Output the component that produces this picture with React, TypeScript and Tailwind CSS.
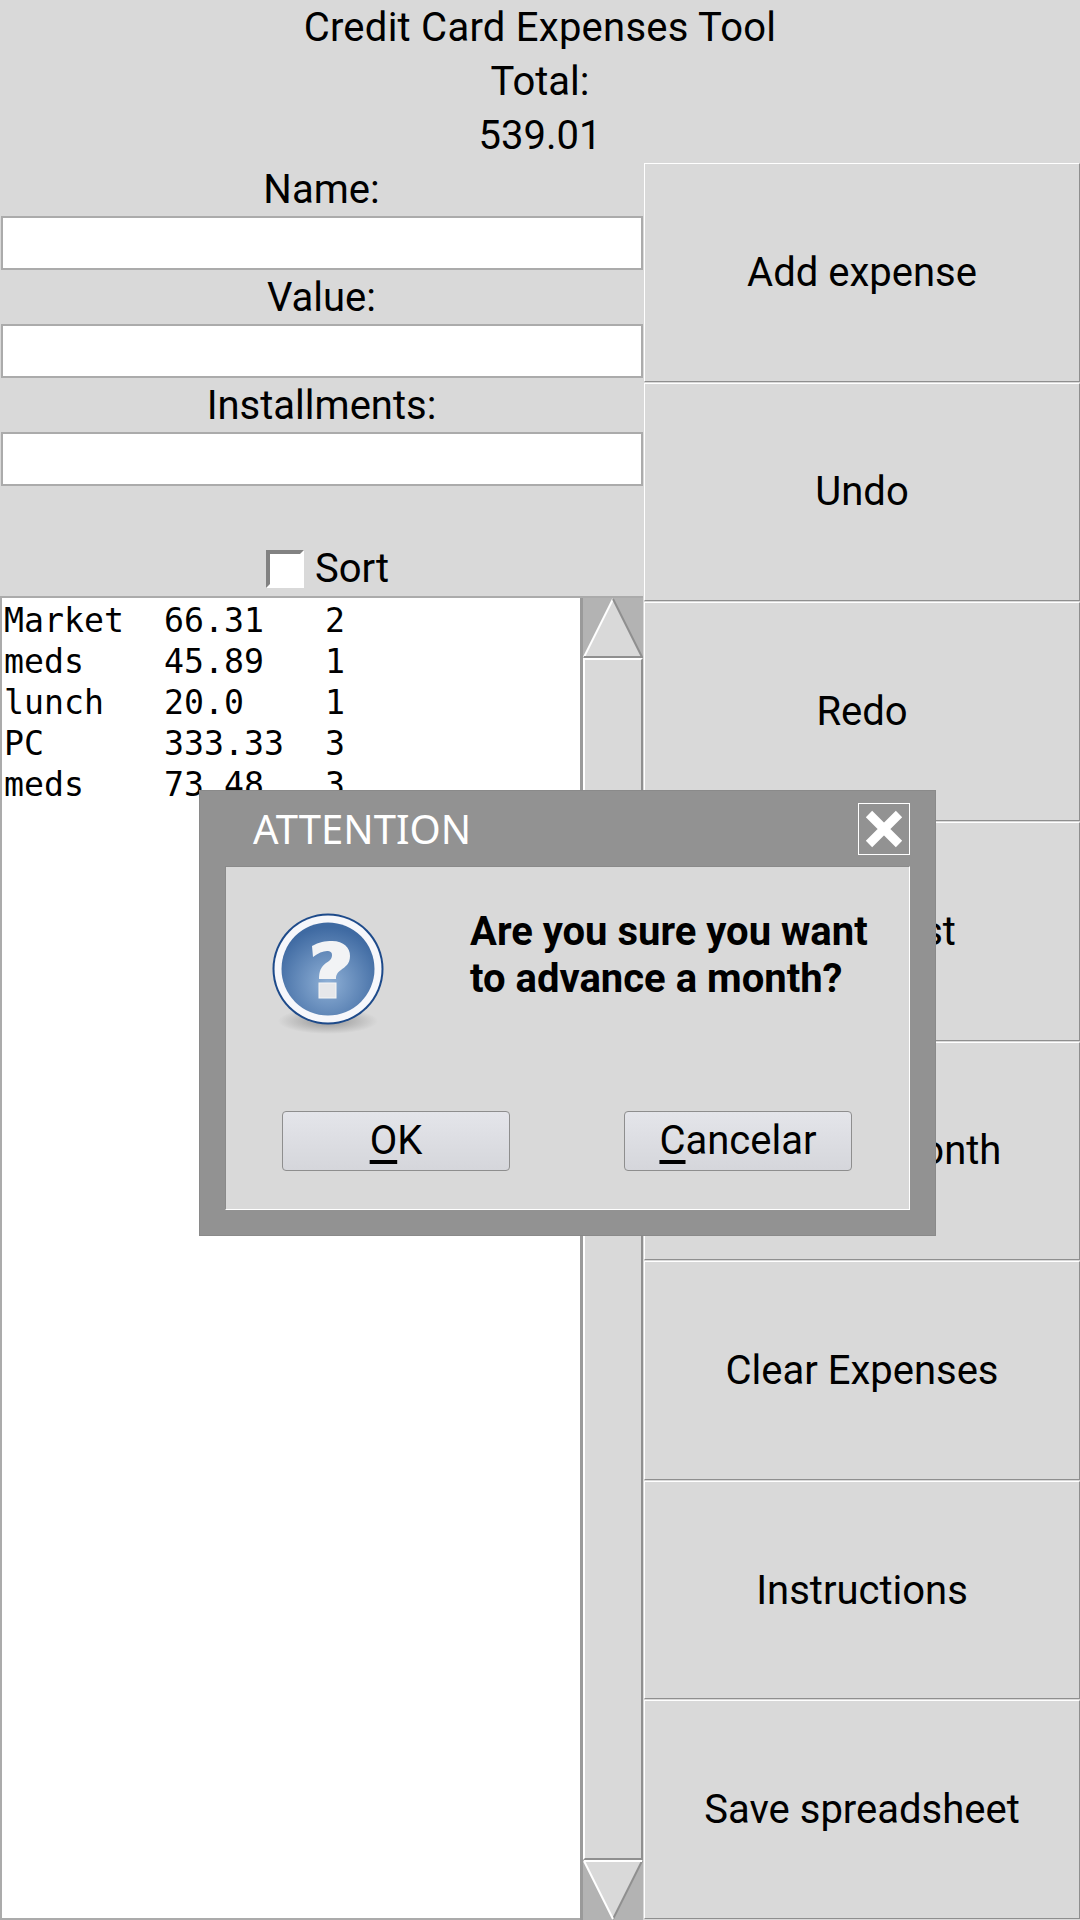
const ROBOTO = "font-['Roboto',sans-serif]";

function Label({ text, wide }: { text: string; wide?: boolean }) {
  return (
    <div className={`h-[54px] pt-[2px] flex items-center justify-center text-[40px] leading-none text-black ${wide ? "tracking-[0.25px]" : ""}`}>
      {text}
    </div>
  );
}

function Entry() {
  return <div className="h-[54px] ml-[1px] bg-white border-2 border-[#ababab]" />;
}

function SideButton({ text }: { text: string }) {
  return (
    <div className="flex items-center justify-center pt-[1px] bg-[#d9d9d9] border border-t-white border-l-white border-r-[#8f8f8f] border-b-[#8f8f8f] text-[40px] text-black">
      {text}
    </div>
  );
}

function DialogButton({ first, rest }: { first: string; rest: string }) {
  return (
    <div className="w-[228px] h-[60px] flex items-center justify-center rounded-[4px] border border-[#8e8e8e] bg-gradient-to-b from-[#e4e5ea] to-[#d5d6db] text-[40px] leading-none text-black">
      <span className="underline decoration-[4px] underline-offset-[6px] [text-decoration-skip-ink:none]">{first}</span>
      <span>{rest}</span>
    </div>
  );
}

function QuestionIcon() {
  return (
    <svg width="120" height="122" viewBox="0 0 120 122" className="block">
      <defs>
        <radialGradient id="q" cx="50%" cy="65%" r="60%">
          <stop offset="0%" stopColor="#8fb0d6" />
          <stop offset="100%" stopColor="#3f6aa2" />
        </radialGradient>
        <radialGradient id="s" cx="50%" cy="50%" r="50%">
          <stop offset="0%" stopColor="#777777" stopOpacity="0.7" />
          <stop offset="100%" stopColor="#777777" stopOpacity="0" />
        </radialGradient>
      </defs>
      <ellipse cx="56" cy="108" rx="50" ry="13" fill="url(#s)" />
      <circle cx="56" cy="56" r="55.5" fill="#1d4a8a" />
      <circle cx="56" cy="56" r="53.5" fill="#f6f7fb" />
      <circle cx="56" cy="56" r="46.5" fill="url(#q)" />
      <path d="M40 33 C47 29 53 28 60 28 C72 28 78 35 78 43 C78 51 73 54 69 57 C65 60 64 62 64 66 L47 66 C47 58 49 54 54 50 C59 47 60 45 60 42 C60 39 58 38 55 38 C51 38 46 40 41 44 Z" fill="#f2f3f5" />
      <rect x="47" y="70" width="17" height="15" fill="#e6e7ea" stroke="#f6f6f6" strokeWidth="1" />
    </svg>
  );
}

export default function App() {
  const rows = [
    ["Market", "66.31", "2"],
    ["meds", "45.89", "1"],
    ["lunch", "20.0", "1"],
    ["PC", "333.33", "3"],
    ["meds", "73.48", "3"],
  ];
  const buttons = ["Add expense", "Undo", "Redo", "Delete last", "Advance month", "Clear Expenses", "Instructions", "Save spreadsheet"];
  return (
    <div className={`relative w-[1080px] h-[1920px] overflow-hidden bg-[#d9d9d9] ${ROBOTO}`}>
      <div className="flex flex-col h-[162px]">
        <Label text="Credit Card Expenses Tool" wide />
        <Label text="Total:" />
        <Label text="539.01" />
      </div>
      <div className="flex h-[1758px]">
        <div className="w-[643px] flex flex-col">
          <Label text="Name:" />
          <Entry />
          <Label text="Value:" />
          <Entry />
          <Label text="Installments:" />
          <Entry />
          <div className="h-[110px] flex items-end justify-center">
            <div className="h-[54px] flex items-center gap-[11px] pl-[12px]">
              <div className="w-[38px] h-[38px] bg-white border-4 border-t-[#828282] border-l-[#828282] border-r-white border-b-white" />
              <span className="text-[40px] leading-none">Sort</span>
            </div>
          </div>
          <div className="flex-1 flex min-h-0 border-t-2 border-[#ababab]">
            <div className="w-[580px] bg-white border-l-2 border-b-2 border-[#ababab] pl-[2px] pt-[2px] font-['DejaVu_Sans_Mono',monospace] text-[33.2px] text-black">
              {rows.map((r, i) => (
                <div key={i} className="h-[41px] leading-[41px] flex">
                  <span className="w-[160px]">{r[0]}</span>
                  <span className="w-[161px]">{r[1]}</span>
                  <span>{r[2]}</span>
                </div>
              ))}
            </div>
            <div className="flex-1 flex flex-col bg-[#b3b3b3] border-l-[3px] border-[#9a9a9a]">
              <svg width="60" height="60" viewBox="0 0 60 60" className="block shrink-0">
                <polygon points="30,1 59,59 1,59" fill="#d9d9d9" />
                <path d="M30 1 L1 59" stroke="#ffffff" strokeWidth="2" fill="none" />
                <path d="M30 1 L59 59 L1 59" stroke="#8f8f8f" strokeWidth="2" fill="none" />
              </svg>
              <div className="flex-1 bg-[#d9d9d9] border-2 border-t-white border-l-white border-r-[#8f8f8f] border-b-[#8f8f8f]" />
              <svg width="60" height="60" viewBox="0 0 60 60" className="block shrink-0">
                <polygon points="1,1 59,1 30,59" fill="#d9d9d9" />
                <path d="M59 1 L30 59" stroke="#8f8f8f" strokeWidth="2" fill="none" />
                <path d="M1 1 L59 1 M1 1 L30 59" stroke="#ffffff" strokeWidth="2" fill="none" />
              </svg>
            </div>
          </div>
        </div>
        <div className="flex-1 grid grid-rows-8 pl-[1px] gap-[1px] pb-[1px] pt-[1px]">
          {buttons.map((b) => (
            <SideButton key={b} text={b} />
          ))}
        </div>
      </div>

      <div className="absolute left-[199px] top-[790px] w-[737px] h-[446px] bg-[#929292] flex flex-col pb-[25px] px-[25px] border border-[#8a8a8a]">
        <div className="h-[75px] flex items-center justify-between relative shrink-0">
          <span className="text-[40px] leading-none text-white ml-[28px] font-['Noto_Sans',sans-serif]">ATTENTION</span>
          <div className="w-[52px] h-[52px] border border-white flex items-center justify-center">
            <svg width="38" height="38" viewBox="0 0 38 38">
              <path d="M4 4 L34 34 M34 4 L4 34" stroke="#ffffff" strokeWidth="9" fill="none" />
            </svg>
          </div>
        </div>
        <div className="flex-1 bg-[#d9d9d9] border-t border-l border-t-[#8a8a8a] border-l-[#8a8a8a] border-r border-b border-r-white border-b-white flex flex-col">
          <div className="flex h-[244px]">
            <div className="w-[244px] pl-[46px] pt-[46px] shrink-0">
              <QuestionIcon />
            </div>
            <div className="pt-[41px] text-[40px] font-bold leading-[47px] text-black whitespace-nowrap">
              Are you sure you want
              <br />
              to advance a month?
            </div>
          </div>
          <div className="flex justify-between pl-[56px] pr-[57px]">
            <DialogButton first="O" rest="K" />
            <DialogButton first="C" rest="ancelar" />
          </div>
        </div>
      </div>
    </div>
  );
}
